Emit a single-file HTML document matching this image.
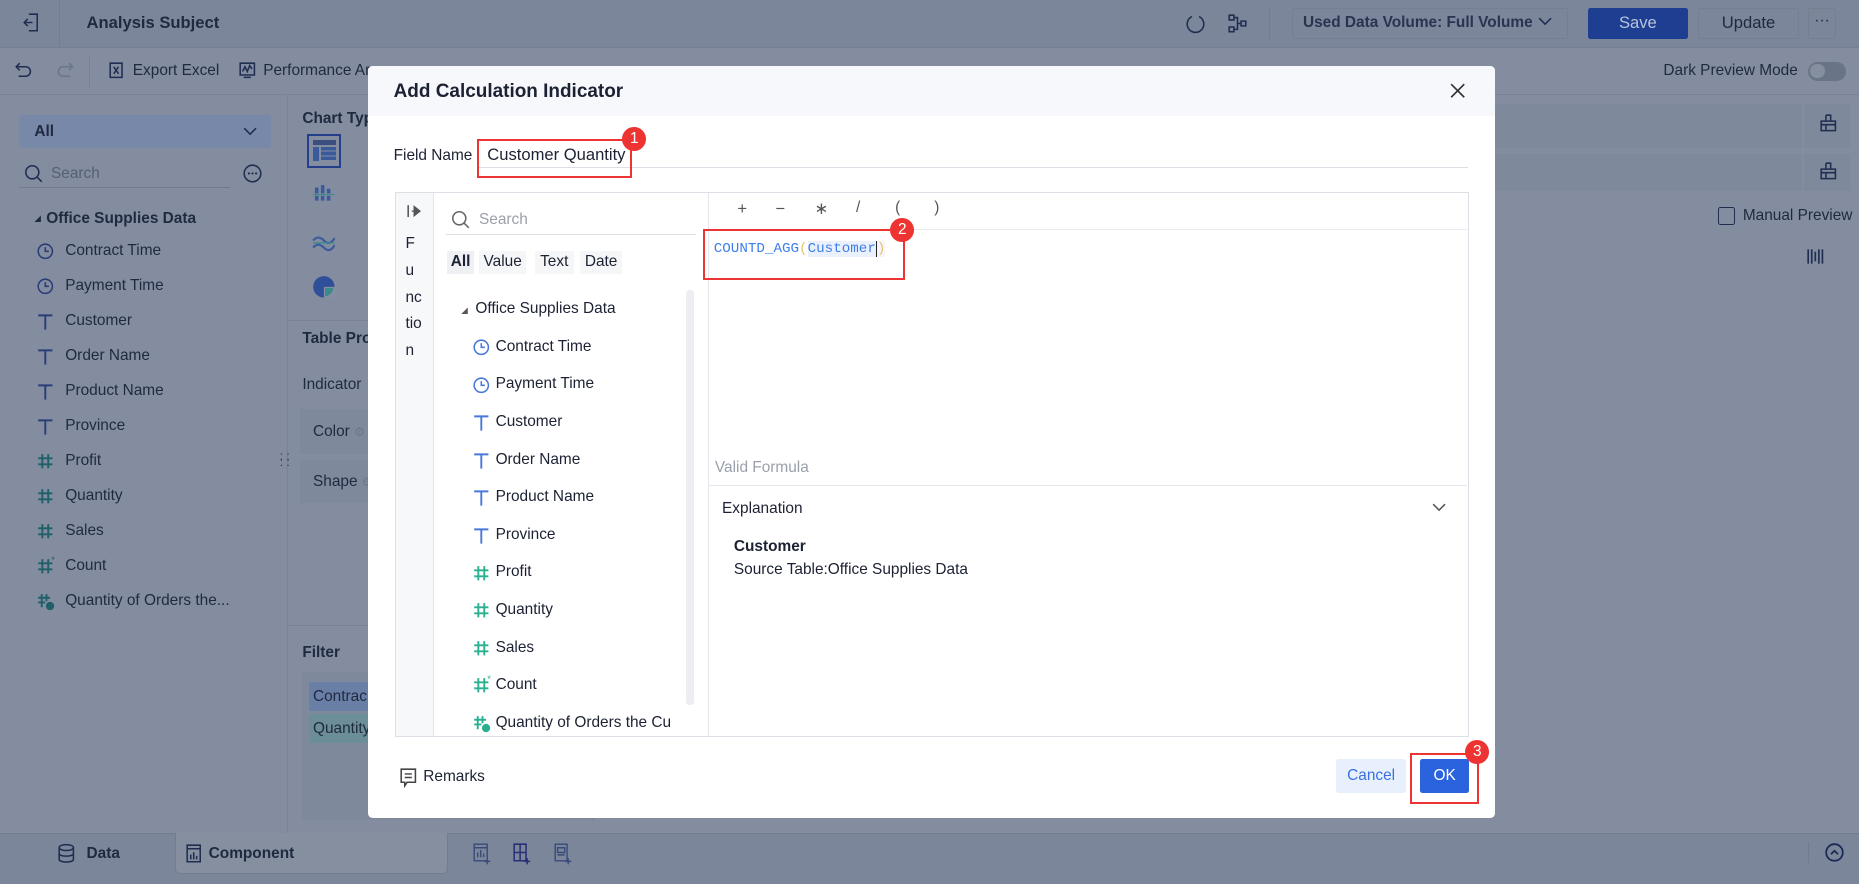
<!DOCTYPE html>
<html><head><meta charset="utf-8">
<style>
html{zoom:1.18559;}
body{margin:0;width:1568px;height:745px;overflow:hidden;position:relative;background:#838d9f;font-family:"Liberation Sans",sans-serif;font-size:13px;color:#1f2940;}
.a{position:absolute;white-space:nowrap;}
.b{font-weight:bold;}
svg{position:absolute;overflow:visible;}
.bg1{background:#7c879a}
.m{color:#1c2233}
.ic{stroke:#1f2d50;fill:none;stroke-width:1.3}
</style></head><body>
<!-- top bar -->
<div class="a" style="left:0;top:0;width:1568px;height:40px;background:#7b869a;border-bottom:1px solid #747f92"></div>
<div class="a" style="left:50px;top:0;width:1px;height:40px;background:#727d90"></div>
<svg style="left:19px;top:11px" width="14" height="16"><path class="ic" d="M5 1h7v14H5M1 8h7M4 5l-3 3 3 3"/></svg>
<div class="a b" style="left:73px;top:11px;font-size:14px">Analysis Subject</div>
<svg style="left:1000px;top:11px" width="16" height="18"><path class="ic" d="M5 3a7 7 0 1 0 6 0" stroke-width="1.6"/></svg>
<svg style="left:1036px;top:12px" width="16" height="16"><path class="ic" d="M1 1h4v4H1zM1 11h4v4H1zM5 3h3v10H5M8 8h3M11 6h4v4h-4z"/></svg>
<div class="a" style="left:1070px;top:6px;width:1px;height:28px;background:#727d90"></div>
<div class="a" style="left:1090px;top:7px;width:231px;height:24px;border:1px solid #747f92;border-radius:2px"></div>
<div class="a b" style="left:1099px;top:12px;color:#2a3450">Used Data Volume: Full Volume</div>
<svg style="left:1297px;top:14px" width="12" height="8"><path class="ic" d="M1 1l5 5 5-5" stroke-width="1.8"/></svg>
<div class="a" style="left:1339px;top:7px;width:85px;height:26px;background:#1e3f91;border-radius:2px;color:#b8c3dc;text-align:center;line-height:26px;font-size:14px">Save</div>
<div class="a" style="left:1432px;top:7px;width:84px;height:24px;border:1px solid #747f92;border-radius:2px;text-align:center;line-height:24px;font-size:14px">Update</div>
<div class="a" style="left:1525px;top:7px;width:22px;height:24px;border:1px solid #747f92;border-radius:2px;text-align:center;line-height:20px">···</div>
<!-- toolbar -->
<div class="a" style="left:0;top:41px;width:1568px;height:38px;background:#838d9f;border-bottom:1px solid #78839a"></div>
<svg style="left:13px;top:52px" width="16" height="14"><path class="ic" d="M4 1L1 4l3 3M1 4h8a4 4 0 0 1 0 8H3" stroke-width="1.5"/></svg>
<svg style="left:47px;top:52px" width="16" height="14"><path d="M11 1l3 3-3 3M14 4H6a4 4 0 0 0 0 8h6" stroke="#6d778a" fill="none" stroke-width="1.5"/></svg>
<div class="a" style="left:75px;top:46px;width:1px;height:28px;background:#78839a"></div>
<svg style="left:92px;top:52px" width="12" height="14"><path class="ic" d="M1 1h10v12H1zM4 4l4 6M8 4l-4 6"/></svg>
<div class="a" style="left:112px;top:52px">Export Excel</div>
<svg style="left:202px;top:52px" width="14" height="14"><path class="ic" d="M1 1h12v10H1zM3 8l2-4 2 4 2-5 2 3M4 13h6"/></svg>
<div class="a" style="left:222px;top:52px">Performance Ar</div>
<div class="a" style="left:1403px;top:52px">Dark Preview Mode</div>
<div class="a" style="left:1525px;top:52px;width:32px;height:16px;border-radius:8px;background:#6a7487"></div>
<div class="a" style="left:1527px;top:54px;width:12px;height:12px;border-radius:6px;background:#868fa0"></div>
<!-- left panel -->
<div class="a" style="left:242px;top:80px;width:1px;height:623px;background:#78839a"></div>
<div class="a" style="left:16px;top:97px;width:213px;height:28px;background:#7888a8;border-radius:3px"></div>
<div class="a b" style="left:29px;top:104px">All</div>
<svg style="left:205px;top:107px" width="12" height="8"><path class="ic" d="M1 1l5 5 5-5" stroke-width="1.5"/></svg>
<svg style="left:20px;top:138px" width="16" height="16"><circle cx="7" cy="7" r="5.5" class="ic" stroke-width="1.5"/><path class="ic" d="M11 11l4 4" stroke-width="1.5"/></svg>
<div class="a" style="left:43px;top:139px;color:#555f75">Search</div>
<div class="a" style="left:16px;top:158px;width:178px;height:1px;background:#707b8f"></div>
<svg style="left:205px;top:138px" width="16" height="16"><circle cx="8" cy="8" r="7" class="ic"/><path d="M5 8h.1M8 8h.1M11 8h.1" stroke="#1f2d50" stroke-width="1.8" stroke-linecap="round"/></svg>
<div class="a" style="left:29px;top:180px;font-size:7px">◢</div>
<div class="a b" style="left:39px;top:177px">Office Supplies Data</div>
<div id="lf"></div>
<div class="a" style="left:236px;top:383px;color:#2a3450;font-size:10px;line-height:5px">: :<br>: :</div>
<!-- middle panel -->
<div class="a" style="left:500px;top:80px;width:1px;height:623px;background:#78839a"></div>
<div class="a b" style="left:255px;top:93px">Chart Typ</div>
<div class="a" style="left:259px;top:113px;width:29px;height:29px;border:2px solid #243e8c;box-sizing:border-box"></div>
<div class="a" style="left:264px;top:118px;width:19px;height:4px;background:#3a4f80"></div>
<div class="a" style="left:264px;top:124px;width:5px;height:12px;background:#3a5a9c"></div>
<div class="a" style="left:271px;top:124px;width:12px;height:12px;background:repeating-linear-gradient(#3a5a9c 0 3px,transparent 3px 4px)"></div>
<svg style="left:263px;top:155px" width="20" height="20"><path d="M4 3v5M4 10v4M9 1v7M9 10v4M14 4v4M14 10v4" stroke="#3a5a9c" stroke-width="3"/><path d="M1 9h18" stroke="#3a8a8c"/></svg>
<svg style="left:263px;top:195px" width="20" height="18"><path d="M1 8q4-5 9 0t9-2M1 14q4-5 9 0t9-2" stroke="#3a5a9c" stroke-width="1.8" fill="none"/><path d="M1 10h18" stroke="#3a8a8c"/></svg>
<svg style="left:263px;top:232px" width="20" height="20"><circle cx="10" cy="10" r="9" fill="#2f4f98"/><path d="M10 10h10v10h-10z" fill="#848ea0"/><path d="M11 11h7a8 8 0 0 1-7 7z" fill="#3a8a8c"/></svg>
<div class="a" style="left:243px;top:270px;width:257px;height:1px;background:#78839a"></div>
<div class="a b" style="left:255px;top:278px">Table Pro</div>
<div class="a" style="left:255px;top:317px">Indicator</div>
<div class="a" style="left:253px;top:345px;width:247px;height:38px;background:#7f899c"></div>
<div class="a" style="left:264px;top:357px">Color <span style="color:#6d778a;font-size:10px">⚙</span></div>
<div class="a" style="left:253px;top:388px;width:247px;height:36px;background:#7f899c"></div>
<div class="a" style="left:264px;top:399px">Shape <span style="color:#6d778a;font-size:10px">⚙</span></div>
<div class="a" style="left:243px;top:527px;width:257px;height:1px;background:#78839a"></div>
<div class="a b" style="left:255px;top:543px">Filter</div>
<div class="a" style="left:255px;top:567px;width:245px;height:125px;background:#7f899c"></div>
<div class="a" style="left:261px;top:575px;width:60px;height:25px;background:#6a7fa6;border-radius:2px"></div>
<div class="a" style="left:264px;top:580px">Contrac</div>
<div class="a" style="left:261px;top:602px;width:60px;height:25px;background:#6b8e98;border-radius:2px"></div>
<div class="a" style="left:264px;top:607px">Quantity</div>
<!-- right area -->
<div class="a" style="left:500px;top:88px;width:1020px;height:37px;background:#7f899c"></div>
<div class="a" style="left:500px;top:130px;width:1020px;height:31px;background:#7f899c"></div>
<div class="a" style="left:500px;top:88px;width:1060px;height:37px;background:transparent"></div>
<div class="a" style="left:1522px;top:88px;width:38px;height:37px;background:#7f899c"></div>
<div class="a" style="left:1522px;top:130px;width:38px;height:31px;background:#7f899c"></div>
<svg style="left:1535px;top:96px" width="14" height="16"><path class="ic" d="M5 1h4v5M5 1v5M1 6h12v8H1zM1 9h12M5 9v5" stroke-width="1.4"/></svg>
<svg style="left:1535px;top:137px" width="14" height="16"><path class="ic" d="M5 1h4v5M5 1v5M1 6h12v8H1zM1 9h12M5 9v5" stroke-width="1.4"/></svg>
<div class="a" style="left:1449px;top:175px;width:13px;height:13px;border:1px solid #1f2d50;border-radius:2px"></div>
<div class="a" style="left:1470px;top:175px">Manual Preview</div>
<svg style="left:1524px;top:208px" width="16" height="16"><path d="M1 2v12M4 2v12M7 4v8M10 2v12M13 2v12" stroke="#1f2d50" stroke-width="1.4"/></svg>
<div class="a" style="left:500px;top:692px;width:1068px;height:11px;background:#838d9f"></div>
<!-- bottom bar -->
<div class="a" style="left:0;top:703px;width:1568px;height:42px;background:#7b869a;border-top:1px solid #727d90"></div>
<div class="a" style="left:148px;top:703px;width:228px;height:33px;background:#858fa0;border:1px solid #727d90;border-top:none;border-radius:0 0 4px 4px"></div>
<svg style="left:49px;top:712px" width="14" height="16"><ellipse cx="7" cy="3" rx="6" ry="2.5" class="ic" stroke-width="1.5"/><path class="ic" d="M1 3v10c0 3 12 3 12 0V3M1 8c0 3 12 3 12 0" stroke-width="1.5"/></svg>
<div class="a b" style="left:73px;top:713px">Data</div>
<svg style="left:157px;top:712px" width="13" height="16"><path class="ic" d="M1 1h11v14H1zM1 4h11M4 13V9M6.5 13V7M9 13V10"/></svg>
<div class="a b" style="left:176px;top:713px">Component</div>
<svg style="left:399px;top:711px" width="16" height="18"><path d="M1 1h11v14H1zM1 4h11M4 12V8M6.5 12V6M9 12V9M12 13v5M9.5 15.5h5" stroke="#3a4a78" fill="none" stroke-width="1.2"/></svg>
<svg style="left:433px;top:711px" width="16" height="18"><path d="M1 1h10v14H1zM1 8h10M6 1v14M12 13v5M9.5 15.5h5" stroke="#2a2f78" fill="none" stroke-width="1.3"/></svg>
<svg style="left:467px;top:711px" width="16" height="18"><path d="M1 1h10v14H1zM3 4h6v4H3zM3 10h6M12 13v5M9.5 15.5h5" stroke="#3a4a78" fill="none" stroke-width="1.2"/></svg>
<div class="a" style="left:1525px;top:710px;width:1px;height:18px;background:#707b8f"></div>
<svg style="left:1539px;top:711px" width="16" height="16"><circle cx="8" cy="8" r="7" stroke="#1a2a55" fill="none" stroke-width="1.5"/><path d="M5 9.5l3-3 3 3" stroke="#1a2a55" fill="none" stroke-width="1.5"/></svg>

<!-- modal -->
<div class="a" style="left:310px;top:56px;width:951px;height:634px;background:#fff;border-radius:4px;overflow:hidden">
 <div class="a" style="left:0;top:0;width:951px;height:42px;background:#f6f8fb"></div>
 <div class="a b m" style="left:22px;top:12px;font-size:16px">Add Calculation Indicator</div>
 <svg style="left:913px;top:14px" width="13" height="13"><path d="M1 1l11 11M12 1L1 12" stroke="#333" stroke-width="1.4"/></svg>
 <div class="a m" style="left:22px;top:68px">Field Name</div>
 <div class="a m" style="left:101px;top:66px;font-size:14px">Customer Quantity</div>
 <div class="a" style="left:94px;top:85px;width:834px;height:1px;background:#dcdfe6"></div>
 <!-- main box -->
 <div class="a" style="left:23px;top:106px;width:904px;height:458px;border:1px solid #dcdfe6"></div>
 <div class="a" style="left:24px;top:107px;width:31px;height:458px;background:#f7f8fa;border-right:1px solid #e4e6eb"></div>
 <svg style="left:33px;top:116px" width="12" height="12"><path d="M1 1v10" stroke="#555" stroke-width="1.3"/><path d="M4 6h3M6 2l5 4-5 4z" fill="#555" stroke="#555"/></svg>
 <div class="a m" style="left:32px;top:139px;line-height:22.5px;white-space:normal;width:20px">F<br>u<br>nc<br>tio<br>n</div>
 <div class="a" style="left:287px;top:107px;width:1px;height:458px;background:#e4e6eb"></div>
 <svg style="left:70px;top:121px" width="16" height="16"><circle cx="7" cy="7" r="5.5" stroke="#666" fill="none" stroke-width="1.3"/><path d="M11 11l4 4" stroke="#666" stroke-width="1.3"/></svg>
 <div class="a" style="left:94px;top:122px;color:#9aa0ab">Search</div>
 <div class="a" style="left:66px;top:141px;width:211px;height:1px;background:#dcdfe6"></div>
 <div class="a b m" style="left:67px;top:156px;width:23px;height:19px;background:#eef0f4;text-align:center;line-height:19px">All</div>
 <div class="a m" style="left:94px;top:156px;width:40px;height:19px;background:#f5f6f8;text-align:center;line-height:19px">Value</div>
 <div class="a m" style="left:141px;top:156px;width:33px;height:19px;background:#f5f6f8;text-align:center;line-height:19px">Text</div>
 <div class="a m" style="left:179px;top:156px;width:36px;height:19px;background:#f5f6f8;text-align:center;line-height:19px">Date</div>
 <div class="a" style="left:269px;top:189px;width:6px;height:350px;background:#eceef2;border-radius:3px"></div>
 <div class="a" style="left:79px;top:201px;font-size:7px;color:#555">◢</div>
 <div class="a m" style="left:91px;top:197px">Office Supplies Data</div>
 <div id="mf" class="a" style="left:0;top:0;width:287px;height:564px;overflow:hidden"></div>
 <!-- formula -->
 <div class="a" style="left:288px;top:137px;width:639px;height:1px;background:#e8eaee"></div>
 <div class="a" style="left:312px;top:112px;color:#555;font-size:14px;word-spacing:0">+</div>
 <div class="a" style="left:344px;top:112px;color:#555;font-size:14px">−</div>
 <div class="a" style="left:377px;top:112px;color:#555;font-size:14px">∗</div>
 <div class="a" style="left:412px;top:112px;color:#555;font-size:13px">/</div>
 <div class="a" style="left:445px;top:112px;color:#555;font-size:13px">(</div>
 <div class="a" style="left:478px;top:112px;color:#555;font-size:13px">)</div>
 <div class="a" style="left:292px;top:147px;font-family:'Liberation Mono',monospace;font-size:12px;color:#3d7eea">COUNTD_AGG<span style="color:#e8c46a">(</span><span style="background:#eaf1fd">Customer</span><span style="border-left:1px solid #222;color:#e8c46a;background:#f4f6fa">)</span></div>
 <div class="a" style="left:293px;top:331px;color:#9aa0ab">Valid Formula</div>
 <div class="a" style="left:288px;top:353px;width:639px;height:1px;background:#e4e6eb"></div>
 <div class="a m" style="left:299px;top:366px">Explanation</div>
 <svg style="left:898px;top:368px" width="12" height="8"><path d="M1 1l5 5 5-5" stroke="#555" fill="none" stroke-width="1.3"/></svg>
 <div class="a b m" style="left:309px;top:398px">Customer</div>
 <div class="a m" style="left:309px;top:417px">Source Table:Office Supplies Data</div>
 <!-- footer -->
 <svg style="left:27px;top:592px" width="14" height="16"><path d="M1 1h12v11H6l-2 3v-3H1z" stroke="#444" fill="none" stroke-width="1.3"/><path d="M4 5h6M4 8h6" stroke="#444" stroke-width="1.2"/></svg>
 <div class="a m" style="left:47px;top:592px">Remarks</div>
 <div class="a" style="left:817px;top:584px;width:59px;height:29px;background:#e8f0fe;border-radius:2px;color:#3b6fe0;text-align:center;line-height:29px">Cancel</div>
 <div class="a" style="left:888px;top:584px;width:41px;height:29px;background:#2b63df;border-radius:2px;color:#fff;text-align:center;line-height:29px">OK</div>
</div>
<!-- annotations -->
<div class="a" style="left:402px;top:117px;width:128px;height:30px;border:2px solid #ee3333"></div>
<div class="a" style="left:525px;top:107px;width:20px;height:20px;border-radius:10px;background:#ee3333;color:#fff;text-align:center;line-height:20px;font-size:13px">1</div>
<div class="a" style="left:593px;top:193px;width:167px;height:40px;border:2px solid #ee3333"></div>
<div class="a" style="left:751px;top:184px;width:20px;height:20px;border-radius:10px;background:#ee3333;color:#fff;text-align:center;line-height:20px;font-size:13px">2</div>
<div class="a" style="left:1189px;top:635px;width:55px;height:40px;border:2px solid #ee3333"></div>
<div class="a" style="left:1236px;top:624px;width:20px;height:20px;border-radius:10px;background:#ee3333;color:#fff;text-align:center;line-height:20px;font-size:13px">3</div>
<script>
var items=[["c","Contract Time"],["c","Payment Time"],["t","Customer"],["t","Order Name"],["t","Product Name"],["t","Province"],["h","Profit"],["h","Quantity"],["h","Sales"],["s","Count"],["q","Quantity of Orders the Cu"]];
function icon(k,col,col2){
 if(k=="c")return '<svg width="14" height="14"><circle cx="7" cy="7" r="6" stroke="'+col+'" fill="none" stroke-width="1.3"/><path d="M7 3.5V7h3" stroke="'+col+'" fill="none" stroke-width="1.3"/></svg>';
 if(k=="t")return '<svg width="14" height="14"><path d="M1 2h12M7 2v12" stroke="'+col+'" stroke-width="1.6"/></svg>';
 var h='<path d="M4.5 1v12M9.5 1v12M1 4.5h12M1 9.5h12" stroke="'+col2+'" stroke-width="1.6"/>';
 if(k=="s")h+='<text x="12" y="4" font-size="8" fill="'+col2+'">*</text>';
 if(k=="q")h='<path d="M4 1v11M8 1v6M1 4h10M1 8h6" stroke="'+col2+'" stroke-width="1.6"/><circle cx="11" cy="11" r="3.5" fill="'+col2+'"/>';
 return '<svg width="14" height="14">'+h+'</svg>';
}
var lf="",mf="";
items.forEach(function(it,i){
 var name=i==10?"Quantity of Orders the...":it[1];
 var y=204+i*29.5;
 lf+='<div class="a" style="left:31px;top:'+(y+1)+'px;position:absolute">'+icon(it[0],"#2a3d78","#1f5f68").replace('<svg','<svg style="position:static"')+'</div><div class="a" style="left:55px;top:'+y+'px">'+name+'</div>';
 var my=229+i*31.7;
 mf+='<div class="a" style="left:89px;top:'+(my+1)+'px">'+icon(it[0],"#4a78d8","#2ab08f").replace('<svg','<svg style="position:static"')+'</div><div class="a m" style="left:108px;top:'+my+'px">'+it[1]+'</div>';
});
document.getElementById("lf").innerHTML=lf;
document.getElementById("mf").innerHTML=mf;
</script>
</body></html>
